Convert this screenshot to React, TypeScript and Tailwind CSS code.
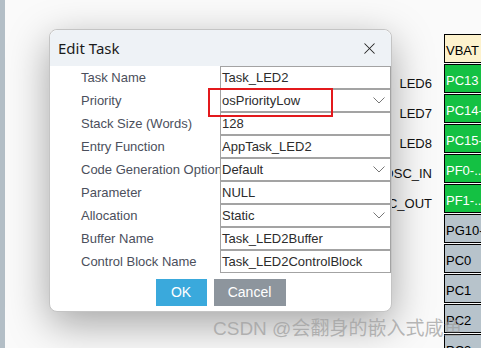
import { X } from 'lucide-react';

type Field = { label: string; value: string; select?: boolean };

const fields: Field[] = [
  { label: 'Task Name', value: 'Task_LED2' },
  { label: 'Priority', value: 'osPriorityLow', select: true },
  { label: 'Stack Size (Words)', value: '128' },
  { label: 'Entry Function', value: 'AppTask_LED2' },
  { label: 'Code Generation Option', value: 'Default', select: true },
  { label: 'Parameter', value: 'NULL' },
  { label: 'Allocation', value: 'Static', select: true },
  { label: 'Buffer Name', value: 'Task_LED2Buffer' },
  { label: 'Control Block Name', value: 'Task_LED2ControlBlock' },
];

type Pin = { name: string; label?: string; kind: 'power' | 'used' | 'free' };

const pins: Pin[] = [
  { name: 'VBAT', kind: 'power' },
  { name: 'PC13', label: 'LED6', kind: 'used' },
  { name: 'PC14-', label: 'LED7', kind: 'used' },
  { name: 'PC15-', label: 'LED8', kind: 'used' },
  { name: 'PF0-..', label: 'RCC_OSC_IN', kind: 'used' },
  { name: 'PF1-..', label: 'RCC_OSC_OUT', kind: 'used' },
  { name: 'PG10-', kind: 'free' },
  { name: 'PC0', kind: 'free' },
  { name: 'PC1', kind: 'free' },
  { name: 'PC2', kind: 'free' },
  { name: 'PC3', kind: 'free' },
];

const pinColor = {
  power: 'bg-[#fdf2cd] text-black',
  used: 'bg-[#14c143] text-white',
  free: 'bg-[#b7c3cb] text-black',
};

function PinColumn() {
  return (
    <div className="-mr-[23px] flex gap-[12px] pt-[34px]">
      <div className="flex flex-col items-end">
        {pins.map((p) => (
          <div
            key={p.name}
            className="flex h-[30px] shrink-0 items-center pt-[9px] text-[13px] leading-none text-[#111]"
          >
            {p.label ?? ''}
          </div>
        ))}
      </div>
      <div className="flex w-[60px] flex-col">
        {pins.map((p) => (
          <div
            key={p.name}
            className={`mb-[1px] flex h-[29px] shrink-0 items-center border border-black pl-[1px] pt-[4px] text-[13px] leading-none ${pinColor[p.kind]}`}
          >
            {p.name}
          </div>
        ))}
      </div>
    </div>
  );
}

function Chevron() {
  return (
    <svg width="12" height="7" viewBox="0 0 12 7" fill="none" className="text-[#777]">
      <path d="M0.5 0.5 L6 6 L11.5 0.5" stroke="currentColor" strokeWidth="1" />
    </svg>
  );
}

function EditTaskDialog() {
  return (
    <div className="absolute left-[49px] top-[29px] w-[343px] rounded-[8px] border border-[#c4c4c4] bg-white shadow-[0_12px_40px_rgba(0,0,0,0.35)]">
      <div className="flex h-[36px] items-center justify-between rounded-t-[8px] bg-[#eef2f6] pl-[8px] pr-[12px]">
        <span className="font-['Noto_Sans'] text-[15px] text-[#1b1b1b]">Edit Task</span>
        <X size={19} strokeWidth={1.3} className="text-[#222]" />
      </div>
      <div className="grid grid-cols-[170px_171px]">
        {fields.map((f) => (
          <div key={f.label} className="contents">
            <div className="flex h-[23px] items-center overflow-hidden whitespace-nowrap pl-[31px] text-[13px] text-[#4b4f5c]">
              {f.label}
            </div>
            <div className="flex h-[23px] items-center justify-between border border-[#a3a3a3] bg-white pl-[1px] pr-[5px] text-[13px] text-[#2c2c2c]">
              <span>{f.value}</span>
              {f.select && <Chevron />}
            </div>
          </div>
        ))}
      </div>
      <div className="flex justify-center gap-[7px] pb-[5px] pt-[6px]">
        <button className="h-[27px] w-[51px] bg-[#3aa9dc] text-[14px] text-white">OK</button>
        <button className="h-[27px] w-[72px] bg-[#8d959d] text-[14px] text-white">Cancel</button>
      </div>
    </div>
  );
}

export default function App() {
  return (
    <div className="relative flex h-[348px] w-[481px] overflow-hidden bg-[#fafafa] font-['Liberation_Sans',Arial,sans-serif]">
      <div className="w-[5px] shrink-0 bg-[#b3bec6]" />
      <div className="flex-1" />
      <PinColumn />
      <EditTaskDialog />
      <div className="absolute left-[208px] top-[88px] h-[29px] w-[125px] border-2 border-[#e3191c]" />
      <div className="absolute left-[213px] top-[315px] whitespace-nowrap font-['Liberation_Sans','Noto_Sans_CJK_SC',sans-serif] text-[19px] text-[#a0a0a0]/75">
        CSDN @会翻身的嵌入式咸鱼
      </div>
    </div>
  );
}
